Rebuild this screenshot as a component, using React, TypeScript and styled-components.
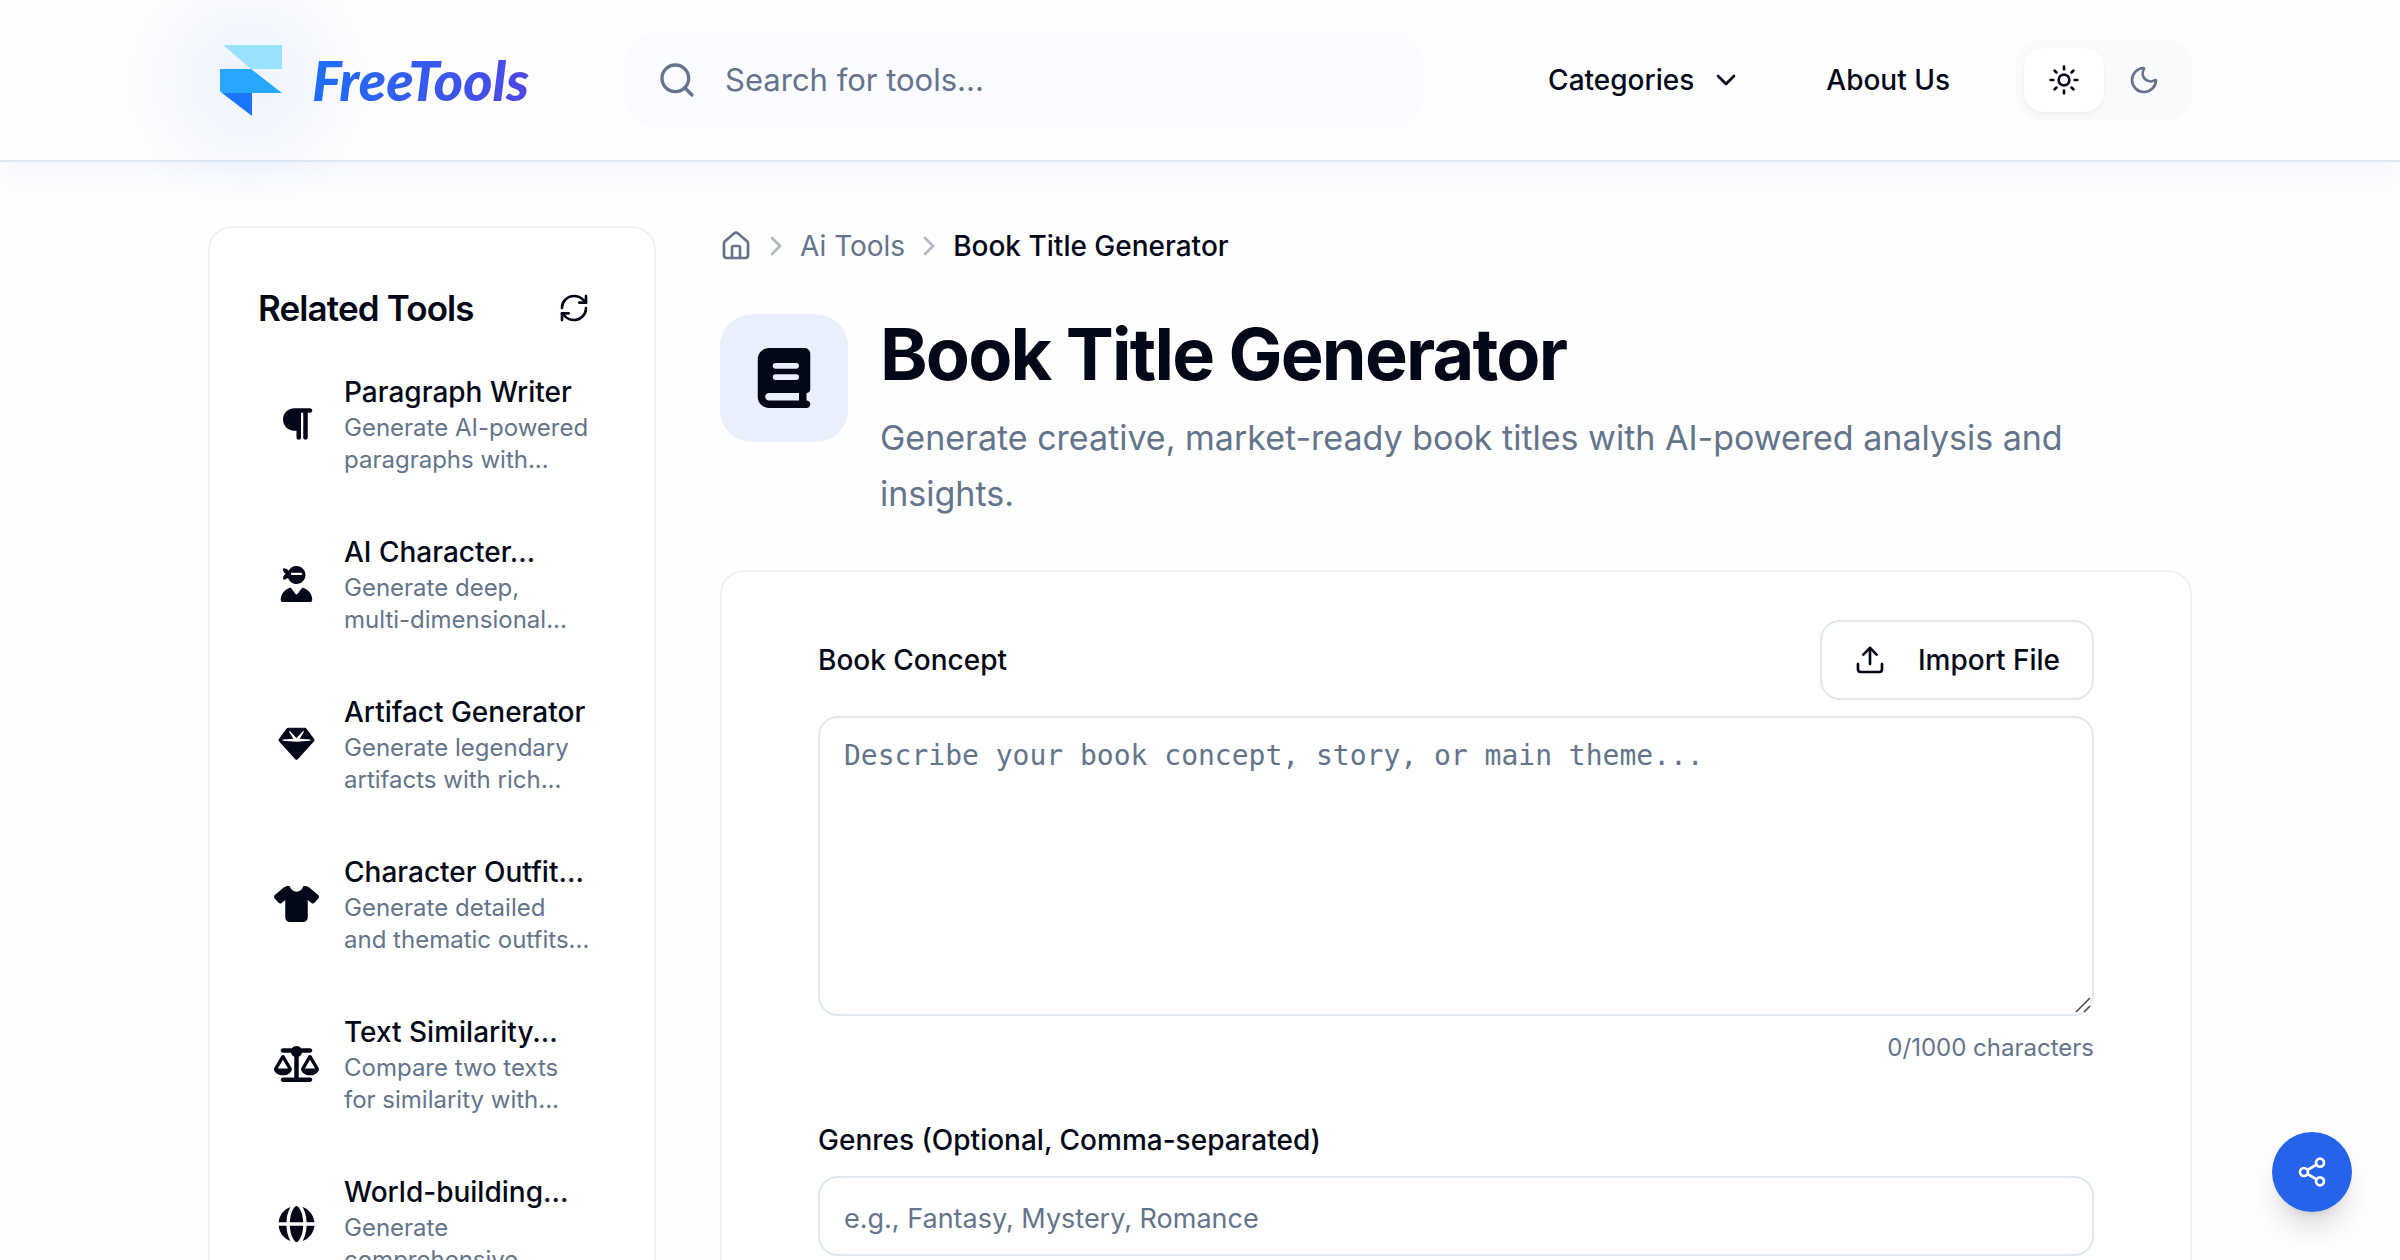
import React, { useState } from "react";
import styled, { createGlobalStyle } from "styled-components";
import { Search, ChevronDown, ChevronRight, Sun, Moon, House, RefreshCw, Upload, Share2 } from "lucide-react";
import { FaGem, FaParagraph, FaScaleBalanced, FaShirt, FaUserNinja } from "react-icons/fa6";

const color = {
  ink: "#020817",
  muted: "#64748b",
  line: "#e2e8f0",
  card: "#f1f1f2",
  primary: "#2563eb",
};

const GlobalStyle = createGlobalStyle`
  *, *::before, *::after { box-sizing: border-box; }
  body {
    margin: 0;
    background: #fefefe;
    color: ${color.ink};
    font-family: Inter, "Liberation Sans", sans-serif;
    font-size: 28px;
    line-height: 40px;
  }
  html { overflow: hidden; }
  h1, h2, p, ul, ol { margin: 0; padding: 0; }
  ul, ol { list-style: none; }
  button, input, textarea { font: inherit; color: inherit; }
  button { cursor: pointer; }
  a { color: inherit; text-decoration: none; }
  svg { display: block; flex-shrink: 0; }
`;

const Container = styled.div`
  max-width: 2048px;
  margin: 0 auto;
  padding: 0 32px;
`;

const Header = styled.header`
  border-bottom: 2px solid #dfe8f1;
  box-shadow: 0 8px 32px rgba(37, 99, 235, 0.06);
`;

const HeaderRow = styled(Container)`
  display: flex;
  align-items: center;
  height: 160px;
`;

const Brand = styled.a`
  display: flex;
  align-items: center;
  gap: 24px;
  margin-right: 96px;
`;

const BrandMark = styled.span`
  position: relative;
  width: 80px;
  height: 80px;

  &::before {
    content: "";
    position: absolute;
    inset: -96px;
    border-radius: 50%;
    background: radial-gradient(closest-side, rgba(37, 99, 235, 0.07), rgba(37, 99, 235, 0.05) 35%, rgba(37, 99, 235, 0.01) 78%, transparent);
    pointer-events: none;
  }

  svg { position: relative; }
`;

const BrandName = styled.span`
  font-family: Lato, "Liberation Sans", sans-serif;
  font-weight: 900;
  font-style: italic;
  font-size: 56px;
  line-height: 72px;
  background: linear-gradient(90deg, #1d6ffb, #4f46e5);
  background-clip: text;
  -webkit-background-clip: text;
  color: transparent;
`;

const SearchBox = styled.label`
  display: flex;
  flex: 1;
  align-items: center;
  gap: 28px;
  height: 96px;
  min-width: 0;
  padding: 0 32px;
  border-radius: 32px;
  background: #fafcff;
  color: ${color.muted};
`;

const SearchInput = styled.input`
  flex: 1;
  min-width: 0;
  padding: 0;
  border: 0;
  outline: 0;
  background: transparent;
  font-size: 31px;
  line-height: 48px;
  &::placeholder { color: ${color.muted}; opacity: 1; }
`;

const Nav = styled.nav`
  display: flex;
  align-items: center;
  gap: 84px;
  margin: 0 66px 0 124px;
  font-weight: 500;
`;

const NavButton = styled.button`
  display: flex;
  align-items: center;
  gap: 16px;
  padding: 0;
  border: 0;
  background: none;
`;

const ThemeSwitch = styled.div`
  display: flex;
  padding: 8px;
  border-radius: 24px;
  background: #f9fafc;
`;

const ThemeButton = styled.button<{ $active: boolean }>`
  display: grid;
  place-items: center;
  width: 80px;
  height: 64px;
  padding: 0;
  border: 0;
  border-radius: 20px;
  background: ${(p) => (p.$active ? "#fff" : "transparent")};
  color: ${(p) => (p.$active ? color.ink : color.muted)};
  box-shadow: ${(p) => (p.$active ? "0 2px 4px rgba(0, 0, 0, 0.05)" : "none")};
`;

const Page = styled(Container)`
  display: grid;
  grid-template-columns: 448px minmax(0, 1fr);
  gap: 64px;
  padding-top: 64px;
  padding-bottom: 64px;
`;

const Card = styled.section`
  border: 2px solid ${color.card};
  border-radius: 24px;
  background: #fff;
`;

const Sidebar = styled(Card)`
  padding: 56px 48px 48px;
`;

const SidebarHead = styled.div`
  display: flex;
  align-items: center;
  justify-content: space-between;
  margin-bottom: 40px;
  padding-right: 16px;
`;

const SidebarTitle = styled.h2`
  font-size: 35px;
  line-height: 48px;
  font-weight: 600;
  letter-spacing: -0.025em;
`;

const IconButton = styled.button`
  padding: 0;
  border: 0;
  background: none;
`;

const ToolList = styled.ul`
  display: grid;
  gap: 56px;
`;

const ToolLink = styled.a`
  display: grid;
  grid-template-columns: 76px minmax(0, 1fr);
  align-items: center;
  gap: 10px;

  svg {
    width: 45px;
    height: 36px;
    justify-self: center;
  }
`;

const ToolName = styled.span`
  display: block;
  font-weight: 500;
  white-space: nowrap;
`;

const ToolText = styled.span`
  display: block;
  font-size: 24px;
  line-height: 32px;
  color: ${color.muted};
  white-space: pre-line;
`;

const Crumbs = styled.ol`
  display: flex;
  align-items: center;
  gap: 8px;
  color: ${color.muted};
`;

const Crumb = styled.li<{ $current?: boolean }>`
  display: flex;
  align-items: center;
  gap: 8px;
  color: ${(p) => (p.$current ? color.ink : color.muted)};
  font-weight: ${(p) => (p.$current ? 500 : 400)};
`;

const Separator = styled(ChevronRight)`
  color: ${color.muted};
  opacity: 0.5;
`;

const Intro = styled.div`
  display: flex;
  align-items: flex-start;
  gap: 32px;
  margin: 48px 0;
`;

const IntroIcon = styled.div`
  display: grid;
  flex-shrink: 0;
  place-items: center;
  width: 128px;
  height: 128px;
  border-radius: 32px;
  background: #e9effd;

  svg {
    width: 60px;
    height: 60px;
  }
`;

const Title = styled.h1`
  font-size: 72px;
  line-height: 80px;
  font-weight: 700;
  letter-spacing: -0.025em;
`;

const Lead = styled.p`
  margin-top: 16px;
  font-size: 34px;
  line-height: 56px;
  color: ${color.muted};
`;

const FormCard = styled(Card)`
  display: grid;
  gap: 56px;
  padding: 48px 96px;
`;

const Field = styled.div`
  display: grid;
  gap: 16px;
`;

const FieldHead = styled.div`
  display: flex;
  align-items: center;
  justify-content: space-between;
`;

const Label = styled.label`
  font-weight: 500;
`;

const ImportButton = styled.button`
  display: flex;
  align-items: center;
  gap: 32px;
  height: 80px;
  padding: 0 32px;
  border: 2px solid ${color.line};
  border-radius: 20px;
  background: #fff;
  font-weight: 500;
`;

const AreaWrap = styled.div`
  position: relative;
  display: grid;
`;

const Area = styled.textarea`
  width: 100%;
  height: 300px;
  padding: 18px 24px;
  border: 2px solid ${color.line};
  border-radius: 20px;
  outline: 0;
  resize: none;
  background: #fff;
  font-family: "DejaVu Sans Mono", monospace;
  &::placeholder { color: ${color.muted}; opacity: 1; }
`;

const Grip = styled.svg`
  position: absolute;
  right: 3px;
  bottom: 3px;
`;

const Counter = styled.p`
  font-size: 24px;
  line-height: 32px;
  text-align: right;
  color: ${color.muted};
`;

const TextInput = styled.input`
  width: 100%;
  height: 80px;
  padding: 4px 24px 0;
  border: 2px solid ${color.line};
  border-radius: 20px;
  outline: 0;
  background: #fff;
  font-size: 27px;
  &::placeholder { color: ${color.muted}; opacity: 1; }
`;

const ShareButton = styled.button`
  position: fixed;
  right: 48px;
  bottom: 48px;
  display: grid;
  place-items: center;
  width: 80px;
  height: 80px;
  padding: 0;
  border: 0;
  border-radius: 50%;
  background: ${color.primary};
  color: #fff;
  box-shadow: 0 20px 30px -6px rgba(0, 0, 0, 0.15), 0 8px 12px -8px rgba(0, 0, 0, 0.15);
`;

function Logo() {
  return (
    <svg width="80" height="80" viewBox="0 0 80 80" aria-hidden="true">
      <path d="M15 5H74V29H43Z" fill="#98e1ff" />
      <path d="M12 29H43L74 53H14L12 51Z" fill="#27a7ff" />
      <path d="M14 53H44V76Z" fill="#1a75ff" />
    </svg>
  );
}

function BookIcon() {
  return (
    <svg viewBox="0 0 448 512" fill="currentColor" fillRule="evenodd" aria-hidden="true">
      <path d="M96 0C43 0 0 43 0 96V416c0 53 43 96 96 96H416c17.700 0 32-14.300 32-32s-14.300-32-32-32V384c17.700 0 32-14.300 32-32V48c0-26.500-21.500-48-48-48ZM96 384H352v64H96c-17.700 0-32-14.300-32-32s14.300-32 32-32ZM152 128a24 24 0 0 0 0 48H328a24 24 0 0 0 0-48ZM152 224a24 24 0 0 0 0 48H328a24 24 0 0 0 0-48Z" />
    </svg>
  );
}

function GlobeIcon() {
  return (
    <svg viewBox="0 0 512 512" fill="currentColor" aria-hidden="true">
      <path d="M351.900 280l-190.900 0c2.900 64.500 17.200 123.900 37.500 167.400 11.400 24.500 23.700 41.800 35.100 52.400 11.200 10.500 18.900 12.200 22.900 12.200s11.700-1.700 22.900-12.200c11.400-10.600 23.700-28 35.100-52.400 20.300-43.500 34.600-102.900 37.500-167.400zM160.900 232l190.900 0C349 167.500 334.700 108.100 314.400 64.600 303 40.200 290.700 22.800 279.300 12.200 268.100 1.700 260.400 0 256.400 0s-11.700 1.700-22.900 12.200c-11.400 10.600-23.700 28-35.100 52.400-20.300 43.500-34.600 102.900-37.500 167.400zm-48 0C116.400 146.400 138.500 66.900 170.800 14.700 78.700 47.300 10.900 131.200 1.500 232l111.400 0zM1.500 280c9.400 100.800 77.200 184.700 169.300 217.300-32.300-52.200-54.400-131.700-57.900-217.300L1.500 280zm398.400 0c-3.500 85.600-25.600 165.100-57.900 217.300 92.100-32.700 159.900-116.500 169.300-217.300l-111.400 0zm111.400-48C501.900 131.200 434.100 47.300 342 14.700 374.300 66.900 396.400 146.400 399.900 232l111.400 0z" />
    </svg>
  );
}

const tools = [
  { icon: FaParagraph, name: "Paragraph Writer", text: "Generate AI-powered\nparagraphs with..." },
  { icon: FaUserNinja, name: "AI Character...", text: "Generate deep,\nmulti-dimensional..." },
  { icon: FaGem, name: "Artifact Generator", text: "Generate legendary\nartifacts with rich..." },
  { icon: FaShirt, name: "Character Outfit...", text: "Generate detailed\nand thematic outfits..." },
  { icon: FaScaleBalanced, name: "Text Similarity...", text: "Compare two texts\nfor similarity with..." },
  { icon: GlobeIcon, name: "World-building...", text: "Generate\ncomprehensive..." },
];

export default function App() {
  const [theme, setTheme] = useState("light");
  const [concept, setConcept] = useState("");

  return (
    <>
      <GlobalStyle />
      <Header>
        <HeaderRow>
          <Brand href="#" aria-label="FreeTools">
            <BrandMark>
              <Logo />
            </BrandMark>
            <BrandName>FreeTools</BrandName>
          </Brand>
          <SearchBox>
            <Search size={40} />
            <SearchInput type="text" placeholder="Search for tools..." aria-label="Search for tools" />
          </SearchBox>
          <Nav>
            <NavButton type="button">
              Categories
              <ChevronDown size={32} />
            </NavButton>
            <a href="#">About Us</a>
          </Nav>
          <ThemeSwitch>
            <ThemeButton type="button" aria-label="Light" $active={theme === "light"} onClick={() => setTheme("light")}>
              <Sun size={32} />
            </ThemeButton>
            <ThemeButton type="button" aria-label="Dark" $active={theme === "dark"} onClick={() => setTheme("dark")}>
              <Moon size={32} />
            </ThemeButton>
          </ThemeSwitch>
        </HeaderRow>
      </Header>

      <Page>
        <Sidebar>
          <SidebarHead>
            <SidebarTitle>Related Tools</SidebarTitle>
            <IconButton type="button" aria-label="Refresh">
              <RefreshCw size={32} />
            </IconButton>
          </SidebarHead>
          <ToolList>
            {tools.map(({ icon: Icon, name, text }) => (
              <li key={name}>
                <ToolLink href="#">
                  <Icon />
                  <span>
                    <ToolName>{name}</ToolName>
                    <ToolText>{text}</ToolText>
                  </span>
                </ToolLink>
              </li>
            ))}
          </ToolList>
        </Sidebar>

        <main>
          <nav aria-label="Breadcrumb">
            <Crumbs>
              <Crumb>
                <a href="#" aria-label="Home">
                  <House size={32} />
                </a>
              </Crumb>
              <Crumb>
                <Separator size={32} />
                <a href="#">Ai Tools</a>
              </Crumb>
              <Crumb $current>
                <Separator size={32} />
                Book Title Generator
              </Crumb>
            </Crumbs>
          </nav>
          <Intro>
            <IntroIcon>
              <BookIcon />
            </IntroIcon>
            <div>
              <Title>Book Title Generator</Title>
              <Lead>Generate creative, market-ready book titles with AI-powered analysis and insights.</Lead>
            </div>
          </Intro>
          <FormCard>
            <Field>
              <FieldHead>
                <Label htmlFor="concept">Book Concept</Label>
                <ImportButton type="button">
                  <Upload size={32} />
                  Import File
                </ImportButton>
              </FieldHead>
              <AreaWrap>
                <Area
                  id="concept"
                  maxLength={1000}
                  value={concept}
                  onChange={(e) => setConcept(e.target.value)}
                  placeholder="Describe your book concept, story, or main theme..."
                />
                <Grip width="16" height="16" viewBox="0 0 16 16" stroke="#444" strokeWidth="1.5" aria-hidden="true">
                  <path d="M1 15L15 1M9 15L15 9" />
                </Grip>
              </AreaWrap>
              <Counter>{concept.length}/1000 characters</Counter>
            </Field>
            <Field>
              <Label htmlFor="genres">Genres (Optional, Comma-separated)</Label>
              <TextInput id="genres" type="text" placeholder="e.g., Fantasy, Mystery, Romance" />
            </Field>
          </FormCard>
        </main>
      </Page>

      <ShareButton type="button" aria-label="Share">
        <Share2 size={32} />
      </ShareButton>
    </>
  );
}
